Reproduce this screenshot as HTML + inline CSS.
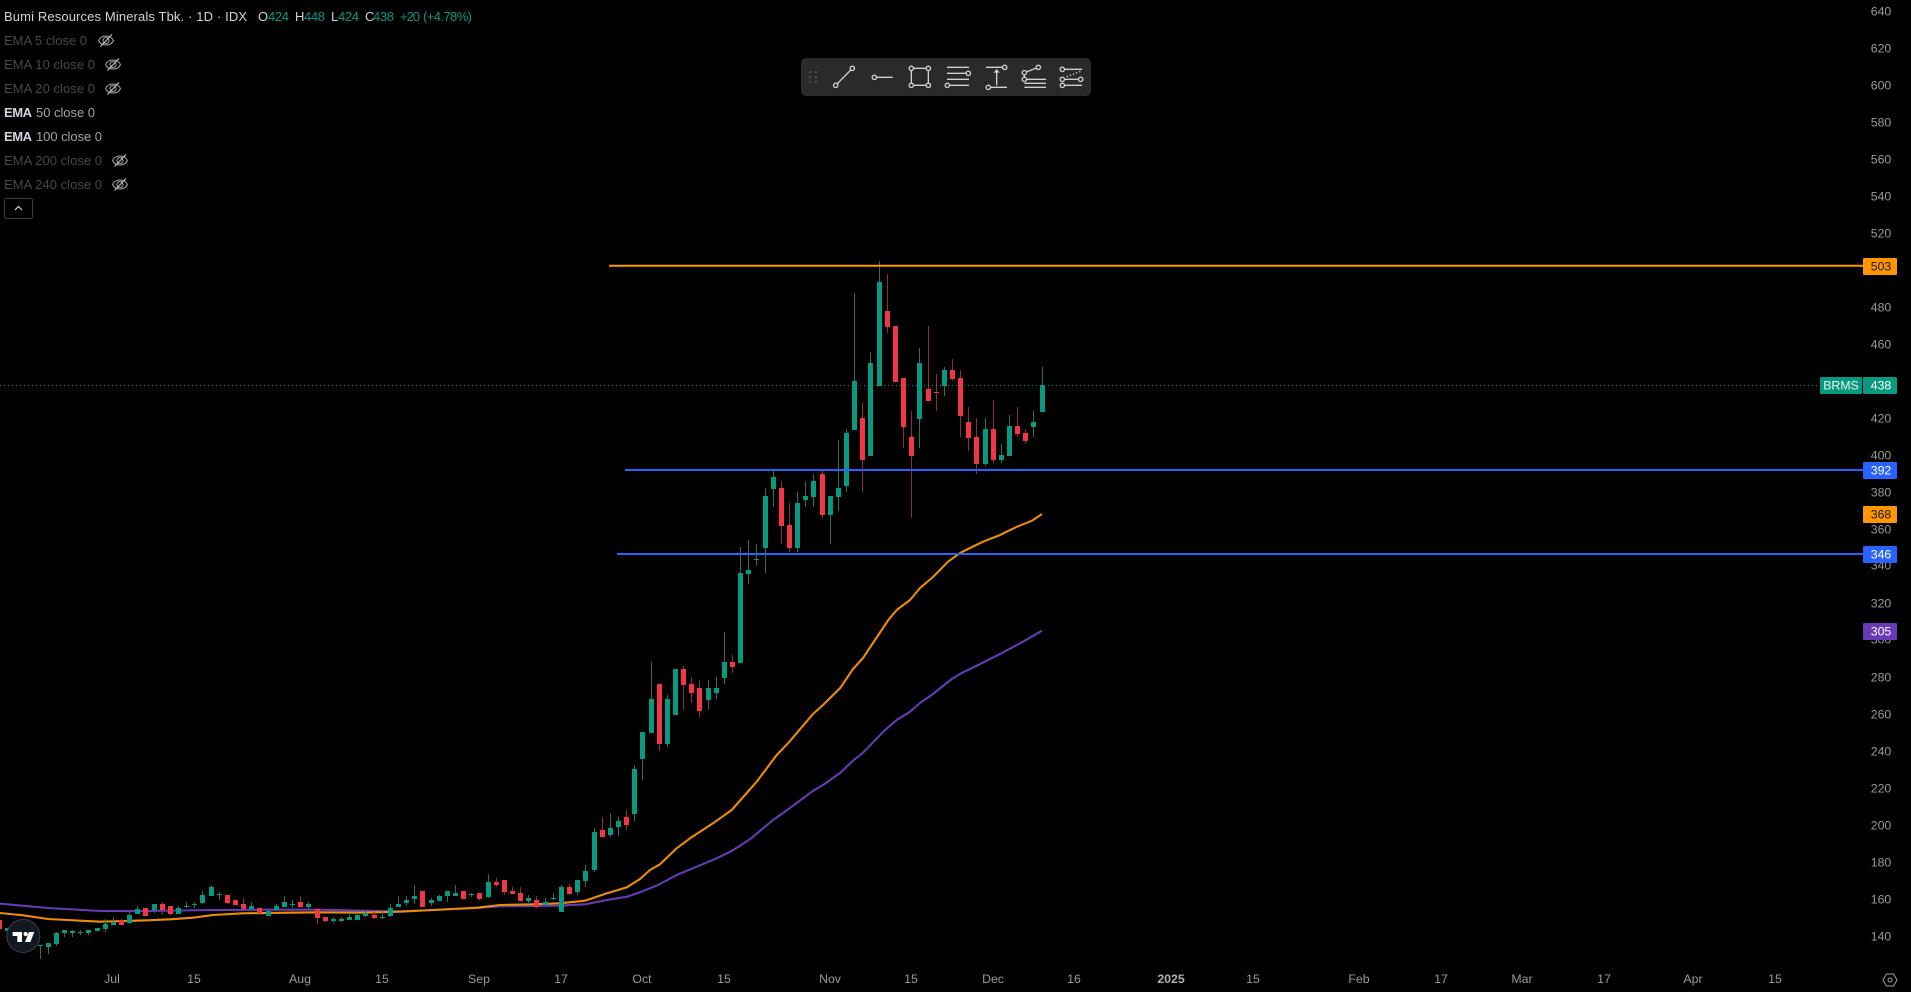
<!DOCTYPE html>
<html lang="en">
<head>
<meta charset="utf-8">
<title>BRMS Chart</title>
<style>
html,body{margin:0;padding:0;background:#000;width:1911px;height:992px;overflow:hidden}
svg{display:block;font-family:"Liberation Sans",sans-serif}
.ax text{font-size:12.3px;fill:#9a9a9a;text-anchor:middle}
.tm text{font-size:12.3px;fill:#9a9a9a;text-anchor:middle}
.lg{font-size:13px}
.lb{font-size:12.3px;text-anchor:middle}
</style>
</head>
<body>
<svg width="1911" height="992" viewBox="0 0 1911 992" xmlns="http://www.w3.org/2000/svg">
<rect width="1911" height="992" fill="#000"/>

<!-- EMA lines -->
<path fill="none" stroke="#673ab7" stroke-width="2.1" stroke-linejoin="round" d="M0 903.7L48 908L100 911L147 911L213 910L267 909.7L320 909.7L360 910.7L400 911.3L433 910L477 908L500 906.3L533 906L560 905.7L585 904.3L607 900L627 896.7L640 892.3L658 885L676.7 875L696.7 866.7L716.7 858.3L731.7 851L750 839.3L773 820L790 808L811.7 791.7L823 785L840 773L853 760.7L863 752.7L885 730L896.7 720L910 711.7L920 703L933 694L951.7 679L961.7 673L976.7 665.7L1000 654L1023 641.7L1042 630.7"/>
<path fill="none" stroke="#ee8c05" stroke-width="2.1" stroke-linejoin="round" d="M0 913L23 915.3L48 919L100 921.7L147 920.3L170 919.3L193 917.7L213 915L243 913.3L287 912.7L320 912.3L360 912.7L400 911.7L433 910L477 907.7L500 905L533 904.3L560 903.3L585 900.7L607 893.3L627 887.3L640 879L650 870L660 864.3L676.7 848.3L690 838.3L713 823.3L731.7 810L756.7 781.7L776.7 755L788 743.3L813 714L823 705L840 688.3L853 669L863 658L875 640L888.3 620L896.7 610L910 600L920 588L933 577L948 561.7L960 553L968 549L983 541.7L1000 535L1017 526.7L1032 520.7L1042 514"/>

<!-- Wicks green -->
<path fill="none" stroke="#2d6e5c" stroke-width="1" d="M40.5 945V959M48.5 943V954M56.5 932V946M64.5 930V937M72.5 930V937M80.5 930V935M88.5 930V935M97.5 928V931M105.5 919V932M113.5 917V925M129.5 912V924M137.5 906V914M154.5 904V913M178.5 906V914M186.5 902V908M194.5 902V908M202.5 891V904M211.5 885V896M219.5 892V900M251.5 902V910M268.5 910V916M276.5 904V910M284.5 896V907M292.5 900V908M308.5 902V909M333.5 917V923M341.5 917V922M349.5 913V920M357.5 913V920M365.5 911V917M382.5 911V919M390.5 904V917M398.5 896V907M406.5 896V906M414.5 885V904M431.5 898V906M439.5 895V901M447.5 891V902M455.5 885V896M471.5 893V897M488.5 874V898M528.5 895V904M545.5 898V905M553.5 893V900M561.5 885V912M577.5 880V895M585.5 865V887M594.5 828V872M610.5 813V837M618.5 817V836M634.5 765V821M642.5 732V780M651.5 662V733M667.5 695V747M675.5 669V715M708.5 680V710M716.5 677V699M724.5 632V684M740.5 547V663M748.5 540V584M756.5 544V566M765.5 488V573M773.5 470V507M797.5 492V552M805.5 481V507M813.5 474V507M830.5 496V544M838.5 440V511M846.5 429V492M854.5 293V430M870.5 352V456M879.5 261V386M919.5 348V448M944.5 367V396M985.5 418V466M1001.5 444V463M1009.5 415V456M1033.5 411V437M1042.5 367V412"/>
<!-- Wicks red -->
<path fill="none" stroke="#8c2f40" stroke-width="1" d="M121.5 919V925M162.5 902V915M170.5 906V915M227.5 895V904M243.5 898V909M259.5 908V915M300.5 896V907M317.5 909V924M325.5 917V922M374.5 912V919M479.5 893V900M496.5 878V887M504.5 880V895M512.5 887V894M520.5 887V901M536.5 896V908M569.5 884V895M602.5 817V837M626.5 810V830M659.5 684V751M683.5 666V710M691.5 677V703M699.5 680V717M732.5 655V673M781.5 481V544M789.5 503V552M822.5 470V518M862.5 403V492M887.5 274V333M903.5 378V448M911.5 411V518M928.5 326V401M936.5 374V411M952.5 359V381M960.5 370V437M968.5 407V451M976.5 418V474M993.5 400V463M1017.5 407V437M1025.5 429V444"/>
<!-- Bodies green -->
<path fill="none" stroke="#089981" stroke-width="5" d="M7.5 928V931M48.5 943V947M56.5 933V944M64.5 930V933M72.5 931V933M88.5 930V933M97.5 928V931M105.5 924V929M113.5 922V925M129.5 915V923M137.5 909V914M154.5 904V910M178.5 908V914M202.5 895V903M211.5 887V896M251.5 906V909M268.5 911V916M276.5 906V910M284.5 902V907M308.5 904V907M333.5 919V921M341.5 919V921M349.5 917V920M357.5 915V920M365.5 913V916M390.5 908V916M398.5 904V907M406.5 900V903M414.5 896V899M431.5 900V903M439.5 896V901M447.5 891V896M455.5 893V896M488.5 882V897M528.5 898V901M545.5 902V905M561.5 887V912M577.5 880V892M585.5 871V881M594.5 832V870M610.5 828V835M618.5 821V827M634.5 769V814M642.5 732V759M651.5 699V733M667.5 699V744M675.5 669V715M708.5 688V700M716.5 688V693M724.5 662V678M740.5 573V663M748.5 570V574M765.5 496V548M773.5 477V489M797.5 503V548M805.5 496V500M813.5 481V497M830.5 496V515M838.5 488V497M846.5 433V486M854.5 381V430M870.5 363V456M879.5 282V386M919.5 363V419M944.5 370V386M985.5 429V464M1001.5 455V460M1009.5 426V456M1033.5 422V427M1042.5 385V412"/>
<path fill="none" stroke="#089981" stroke-width="1" d="M38 945.5H43M78 932.5H83M184 906.5H189M192 904.5H197M217 894.5H222M290 904.5H295M380 917.5H385M469 894.5H474M551 898.5H556M754 559.5H759"/>
<!-- Bodies red -->
<path fill="none" stroke="#f23645" stroke-width="5" d="M-.5 920V929M121.5 920V925M145.5 908V916M162.5 904V910M170.5 906V914M227.5 895V903M235.5 900V905M243.5 904V909M259.5 908V913M300.5 902V907M317.5 909V918M325.5 917V921M374.5 915V918M422.5 891V907M463.5 891V899M479.5 893V899M496.5 882V885M504.5 880V892M512.5 891V894M520.5 893V901M536.5 900V907M569.5 887V894M602.5 830V837M626.5 817V825M659.5 684V744M683.5 669V685M691.5 684V693M699.5 688V711M732.5 662V667M781.5 488V526M789.5 525V548M822.5 474V515M862.5 418V460M887.5 311V327M895.5 326V382M903.5 378V427M911.5 437V456M928.5 389V401M952.5 370V379M960.5 378V416M968.5 422V438M976.5 437V464M993.5 429V460M1017.5 426V434M1025.5 433V441"/>
<path fill="none" stroke="#f23645" stroke-width="1" d="M934 392.5H939"/>

<!-- Current price dotted -->
<path fill="none" stroke="#089981" stroke-width="1" stroke-dasharray="1 3" d="M0 385.5H1820"/>

<!-- Horizontal lines -->
<path fill="none" stroke="#ff9800" stroke-width="2" d="M609 265.7H1863"/>
<path fill="none" stroke="#2962ff" stroke-width="2" d="M625 470H1863"/>
<path fill="none" stroke="#2962ff" stroke-width="2" d="M617 554H1863"/>

<!-- Price axis -->
<g class="ax">
<text x="1881" y="15.7">640</text>
<text x="1881" y="52.7">620</text>
<text x="1881" y="89.7">600</text>
<text x="1881" y="126.7">580</text>
<text x="1881" y="163.7">560</text>
<text x="1881" y="200.7">540</text>
<text x="1881" y="237.7">520</text>
<text x="1881" y="311.7">480</text>
<text x="1881" y="348.7">460</text>
<text x="1881" y="422.7">420</text>
<text x="1881" y="459.7">400</text>
<text x="1881" y="496.7">380</text>
<text x="1881" y="533.7">360</text>
<text x="1881" y="569.7">340</text>
<text x="1881" y="607.7">320</text>
<text x="1881" y="643.7">300</text>
<text x="1881" y="681.7">280</text>
<text x="1881" y="718.7">260</text>
<text x="1881" y="755.7">240</text>
<text x="1881" y="792.7">220</text>
<text x="1881" y="829.7">200</text>
<text x="1881" y="866.7">180</text>
<text x="1881" y="903.7">160</text>
<text x="1881" y="940.7">140</text>
</g>

<!-- Price labels -->
<rect x="1863" y="258" width="34" height="17" rx="1" fill="#ff9800"/>
<text class="lb" x="1881" y="270.7" fill="#1a1207">503</text>
<rect x="1820" y="377" width="42" height="17" rx="1" fill="#089981"/>
<text class="lb" x="1841" y="389.7" fill="#e8f5f1">BRMS</text>
<rect x="1863" y="377" width="34" height="17" rx="1" fill="#089981"/>
<text class="lb" x="1881" y="389.7" fill="#fff">438</text>
<rect x="1863" y="462" width="34" height="17" rx="1" fill="#2962ff"/>
<text class="lb" x="1881" y="474.7" fill="#fff">392</text>
<rect x="1863" y="506" width="34" height="17" rx="1" fill="#ff9800"/>
<text class="lb" x="1881" y="518.7" fill="#1a1207">368</text>
<rect x="1863" y="546" width="34" height="17" rx="1" fill="#2962ff"/>
<text class="lb" x="1881" y="558.7" fill="#fff">346</text>
<rect x="1863" y="623" width="34" height="17" rx="1" fill="#673ab7"/>
<text class="lb" x="1881" y="635.7" fill="#fff">305</text>

<!-- Time axis -->
<g class="tm">
<text x="112" y="983">Jul</text>
<text x="194" y="983">15</text>
<text x="300" y="983">Aug</text>
<text x="382" y="983">15</text>
<text x="479" y="983">Sep</text>
<text x="561" y="983">17</text>
<text x="642" y="983">Oct</text>
<text x="724" y="983">15</text>
<text x="830" y="983">Nov</text>
<text x="911" y="983">15</text>
<text x="993" y="983">Dec</text>
<text x="1074" y="983">16</text>
<text x="1171" y="983" style="font-weight:700;fill:#b0b0b0">2025</text>
<text x="1253" y="983">15</text>
<text x="1359" y="983">Feb</text>
<text x="1441" y="983">17</text>
<text x="1522" y="983">Mar</text>
<text x="1604" y="983">17</text>
<text x="1693" y="983">Apr</text>
<text x="1775" y="983">15</text>
</g>

<!-- Settings icon -->
<path fill="none" stroke="#a0a0a0" stroke-width="1" d="M1886.5 974H1893.5L1897 980L1893.5 986H1886.5L1883 980Z"/>
<circle cx="1890" cy="980" r="2" fill="none" stroke="#a0a0a0" stroke-width="1"/>

<!-- Legend -->
<g class="lg">
<text x="4" y="21" fill="#d1d4dc" textLength="243">Bumi Resources Minerals Tbk. · 1D · IDX</text>
<text x="258" y="21" fill="#d1d4dc">O</text><text x="268" y="21" fill="#089981" textLength="21">424</text>
<text x="295" y="21" fill="#d1d4dc">H</text><text x="304" y="21" fill="#089981" textLength="21">448</text>
<text x="331" y="21" fill="#d1d4dc">L</text><text x="338" y="21" fill="#089981" textLength="21">424</text>
<text x="365" y="21" fill="#d1d4dc">C</text><text x="373" y="21" fill="#089981" textLength="21">438</text>
<text x="400" y="21" fill="#089981" textLength="20">+20</text>
<text x="423" y="21" fill="#089981" textLength="49">(+4.78%)</text>

<text x="4" y="45" fill="#45484f" textLength="83">EMA 5 close 0</text>
<text x="4" y="69" fill="#45484f" textLength="91">EMA 10 close 0</text>
<text x="4" y="93" fill="#45484f" textLength="91">EMA 20 close 0</text>
<text x="4" y="117" fill="#d1d4dc" font-weight="700" textLength="28">EMA</text>
<text x="36" y="117" fill="#a0a3aa" textLength="59">50 close 0</text>
<text x="4" y="141" fill="#d1d4dc" font-weight="700" textLength="28">EMA</text>
<text x="36" y="141" fill="#a0a3aa" textLength="66">100 close 0</text>
<text x="4" y="165" fill="#45484f" textLength="98">EMA 200 close 0</text>
<text x="4" y="189" fill="#45484f" textLength="98">EMA 240 close 0</text>
</g>
<!-- Eye-off icons -->
<defs>
<g id="eye" fill="none" stroke="#a8a8a8" stroke-width="1">
<path d="M-7.5 0C-4.5 -6 4.5 -6 7.5 0C4.5 6 -4.5 6 -7.5 0Z"/>
<circle r="3"/>
<path d="M-5.5 6L6 -6" stroke="#d0d0d0"/>
</g>
</defs>
<use href="#eye" x="106" y="40.5"/>
<use href="#eye" x="113" y="64.5"/>
<use href="#eye" x="113" y="88.5"/>
<use href="#eye" x="120" y="160.5"/>
<use href="#eye" x="120" y="184.5"/>

<!-- Collapse button -->
<rect x="4.5" y="198.5" width="28" height="20" rx="2" fill="none" stroke="#3a3d44" stroke-width="1"/>
<path d="M15 210L18.5 206.5L22 210" fill="none" stroke="#d1d4dc" stroke-width="1.2"/>

<!-- Drawing toolbar -->
<rect x="801" y="58" width="290" height="38" rx="5" fill="#2a2a2a"/>
<g transform="translate(790 50) scale(.33333)">
<g fill="#4f4f4f">
<rect x="57" y="63" width="6" height="6"/><rect x="75" y="63" width="6" height="6"/>
<rect x="57" y="78" width="6" height="6"/><rect x="75" y="78" width="6" height="6"/>
<rect x="57" y="93" width="6" height="6"/><rect x="75" y="93" width="6" height="6"/>
</g>
<g fill="none" stroke="#d0d0d0" stroke-width="4">
<path d="M141 102L183 59"/><circle cx="137" cy="106" r="6.5"/><circle cx="187" cy="55" r="6.5"/>
<circle cx="253" cy="82" r="6.5"/><path d="M259 82H308"/>
<path d="M370 55H409M364 61V100M415 61V100M370 106H409"/>
<circle cx="364" cy="55" r="6.5"/><circle cx="415" cy="55" r="6.5"/><circle cx="364" cy="106" r="6.5"/><circle cx="415" cy="106" r="6.5"/>
<path d="M471 52H537M471 70H529M471 88H537M478 106H537"/><circle cx="535" cy="70" r="6.5"/><circle cx="472" cy="106" r="6.5"/>
<path d="M588 52H638M601 112H651M620 106V62"/><circle cx="644" cy="52" r="6.5"/><circle cx="595" cy="112" r="6.5"/>
<path d="M615 66L620 60L625 66Z" fill="#d0d0d0"/>
<path d="M709 66L739 54M703 74V82M709 88H768M703 100H768M703 112H768"/><circle cx="703" cy="68" r="6.5"/><circle cx="745" cy="52" r="6.5"/><circle cx="703" cy="88" r="6.5"/>
<path d="M823 58H876M823 88H866M823 106H876"/><circle cx="817" cy="58" r="6.5"/><circle cx="817" cy="88" r="6.5"/><circle cx="872" cy="88" r="6.5"/><circle cx="817" cy="106" r="6.5"/>
<path d="M830 80L872 64" stroke-dasharray="4 6"/>
</g>
</g>

<!-- TV logo -->
<circle cx="23.3" cy="936" r="16.5" fill="#131722" stroke="#3b3f48" stroke-width="1"/>
<g transform="translate(0 860) scale(.33333)" fill="#fff">
<path d="M38 216H66V246H52V228H38Z"/>
<circle cx="77" cy="222" r="6.5"/>
<path d="M87 216H103L91 246H75Z"/>
</g>
</svg>
</body>
</html>
